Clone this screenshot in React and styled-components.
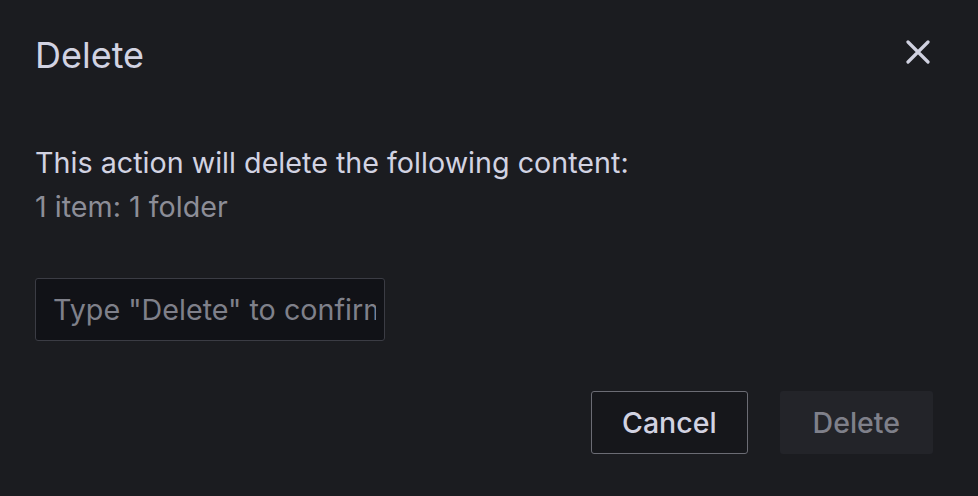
import React from 'react'
import styled, { createGlobalStyle } from 'styled-components'

const GlobalStyle = createGlobalStyle`
  html, body {
    margin: 0;
    padding: 0;
    background: #1b1c20;
  }
  body {
    font-family: Inter, "Noto Sans", sans-serif;
    color: #ccccdc;
  }
`

const Modal = styled.div`
  width: 978px;
  height: 496px;
  box-sizing: border-box;
  background: #1b1c20;
  padding: 0 45px 0 35px;
  display: flex;
  flex-direction: column;
`

const Header = styled.div`
  display: flex;
  align-items: center;
  justify-content: space-between;
  height: 110px;
`

const Title = styled.h1`
  margin: 0;
  font-size: 36px;
  font-weight: 400;
  color: #d2d3e2;
`

const CloseButton = styled.button`
  background: none;
  border: none;
  padding: 0;
  width: 30px;
  height: 30px;
  margin-bottom: 7px;
  display: flex;
  align-items: center;
  justify-content: center;
  color: #d0d1e0;
  cursor: pointer;
`

const Body = styled.div`
  padding-top: 31px;
`

const Text = styled.p`
  margin: 0;
  font-size: 28.7px;
  line-height: 44px;
  color: ${p => (p.$muted ? '#8c8d97' : '#d2d3e2')};
`

const Input = styled.input`
  display: block;
  margin-top: 49px;
  width: 350px;
  height: 63px;
  box-sizing: border-box;
  background: #111217;
  border: 1px solid #3b3c44;
  border-radius: 3px;
  padding: 0 8px 0 17px;
  font-family: Inter, "Noto Sans", sans-serif;
  font-size: 28.7px;
  color: #d2d3e2;
  outline: none;
  &::placeholder {
    color: #7f808a;
  }
`

const Footer = styled.div`
  display: flex;
  justify-content: flex-end;
  gap: 32px;
  margin-top: 50px;
`

const Button = styled.button`
  height: 63px;
  box-sizing: border-box;
  padding: 0 ${p => (p.$variant === 'secondary' ? '30px' : '32px')};
  border-radius: 3px;
  font-family: Inter, "Noto Sans", sans-serif;
  font-size: 28.5px;
  font-weight: 500;
  border: ${p => (p.$variant === 'secondary' ? '1px solid #6b6c74' : '1px solid transparent')};
  background: ${p => (p.$variant === 'secondary' ? '#16171b' : '#232429')};
  color: ${p => (p.$variant === 'secondary' ? '#d2d3e2' : '#7f808a')};
  cursor: ${p => (p.disabled ? 'not-allowed' : 'pointer')};
`

const Close = () => (
  <svg width="24" height="24" viewBox="0 0 24 24" fill="none" stroke="currentColor" strokeWidth="3.2" strokeLinecap="round">
    <path d="M2 2L22 22M22 2L2 22" />
  </svg>
)

const App = () => {
  return (
    <>
      <GlobalStyle />
      <Modal>
        <Header>
          <Title>Delete</Title>
          <CloseButton aria-label="Close"><Close /></CloseButton>
        </Header>
        <Body>
          <Text>This action will delete the following content:</Text>
          <Text $muted>1 item: 1 folder</Text>
          <Input placeholder='Type "Delete" to confirm' />
          <Footer>
            <Button $variant="secondary">Cancel</Button>
            <Button disabled>Delete</Button>
          </Footer>
        </Body>
      </Modal>
    </>
  )
}

export default App
